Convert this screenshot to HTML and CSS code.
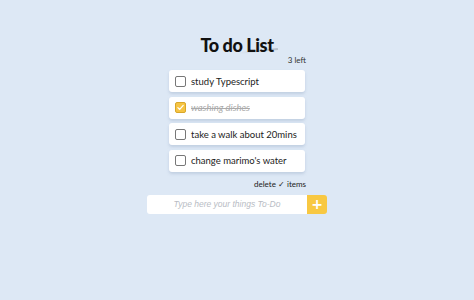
FILE: index.html
```html
<!DOCTYPE html>
<html>
<head>
<meta charset="utf-8">
<link rel="stylesheet" href="styles.css">
</head>
<body>
<main class="app">
  <h1 class="title">To do List</h1>
  <div class="left">3 left</div>
  <ul class="list">
    <li class="card"><span class="box"></span><span class="label">study Typescript</span></li>
    <li class="card done"><span class="box checked"><svg viewBox="0 0 12 12" width="9" height="9"><path d="M2.5 6.2 L5 8.6 L9.6 3.2" fill="none" stroke="#fff" stroke-width="1.6" stroke-linecap="round" stroke-linejoin="round"/></svg></span><span class="label">washing dishes</span></li>
    <li class="card"><span class="box"></span><span class="label">take a walk about 20mins</span></li>
    <li class="card"><span class="box"></span><span class="label">change marimo's water</span></li>
  </ul>
  <div class="delete">delete ✓ items</div>
  <form class="add">
    <input class="input" type="text" placeholder="Type here your things To-Do">
    <button class="plus" type="button">+</button>
  </form>
</main>
</body>
</html>
```
FILE: styles.css
```css
html, body {
  margin: 0;
  padding: 0;
  background: #dde8f5;
  font-family: Lato, "Noto Sans", sans-serif;
}
.app {
  width: 180px;
  margin: 0 auto;
  padding-top: 35px;
  display: flex;
  flex-direction: column;
  align-items: center;
}
.title {
  margin: 0;
  font-family: Lato, sans-serif;
  font-weight: 900;
  font-size: 18px;
  line-height: 20px;
  letter-spacing: -0.4px;
  color: #111;
  position: relative;
}
.title::after {
  content: "";
  position: absolute;
  right: -4px;
  bottom: 3px;
  width: 40px;
  height: 2px;
  background: linear-gradient(90deg, rgba(0,0,0,0), rgba(0,0,0,0.18));
  transform: rotate(-6deg);
}
.left {
  align-self: flex-end;
  margin-right: 21px;
  font-size: 8px;
  color: #333;
  line-height: 10px;
  margin-top: 0;
}
.list {
  list-style: none;
  margin: 5px 0 0;
  padding: 0;
  width: 136px;
  display: flex;
  flex-direction: column;
  gap: 4.5px;
}
.card {
  height: 22px;
  background: #fff;
  border-radius: 3px;
  box-shadow: 0 2px 3px rgba(140,160,190,0.35);
  display: flex;
  align-items: center;
  padding-left: 6px;
  gap: 5px;
  font-size: 9.5px;
  color: #222;
}
.box {
  width: 9px;
  height: 9px;
  border: 1px solid #777;
  border-radius: 2px;
  box-sizing: content-box;
  display: flex;
  align-items: center;
  justify-content: center;
  flex: none;
}
.box.checked {
  background: #f6c443;
  border-color: #d9a72a;
}
.done .label {
  color: #aaa;
  font-style: italic;
  text-decoration: line-through;
}
.delete {
  align-self: flex-end;
  margin-right: 21px;
  margin-top: 7px;
  font-size: 8px;
  color: #222;
  line-height: 10px;
}
.add {
  margin: 6px 0 0;
  display: flex;
  width: 180px;
}
.input {
  width: 160px;
  height: 19px;
  box-sizing: border-box;
  border: none;
  border-radius: 3px 0 0 3px;
  background: #fff;
  font-family: "Liberation Sans", sans-serif;
  font-style: italic;
  font-size: 8.5px;
  text-align: center;
  padding: 0;
  outline: none;
}
.input::placeholder {
  color: #b8bcc4;
}
.plus {
  width: 20px;
  height: 19px;
  border: none;
  padding: 0;
  background: #f8c842;
  color: #fff;
  font-size: 14px;
  font-weight: bold;
  line-height: 19px;
  border-radius: 0 3px 3px 0;
  font-family: "DejaVu Sans", sans-serif;
}
```
